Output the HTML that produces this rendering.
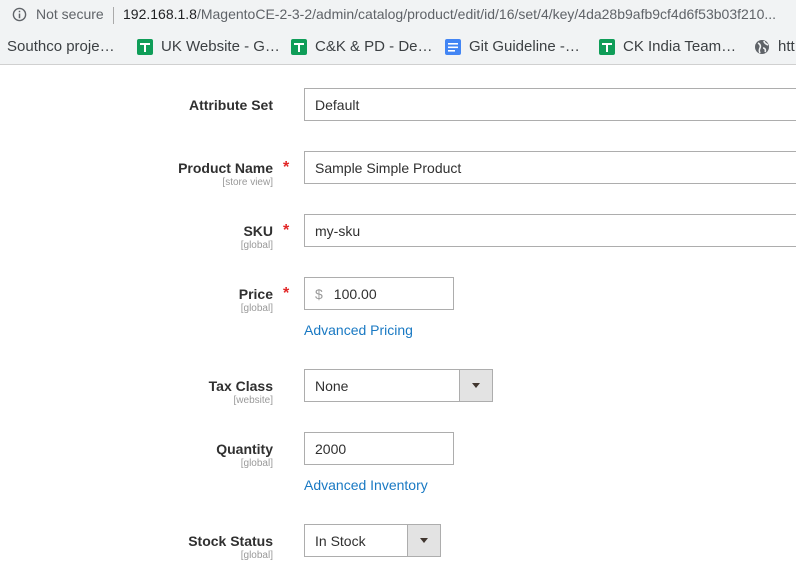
<!DOCTYPE html>
<html><head><style>
*{box-sizing:border-box;margin:0;padding:0}
body{width:796px;height:573px;overflow:hidden;background:#fff;font-family:"Liberation Sans",sans-serif;position:relative}
.top{position:absolute;left:0;top:0;width:796px;height:30px;background:#f1f3f4}
.url{position:absolute;top:6px;font-size:14px;color:#5f6368;white-space:nowrap}
.bm{position:absolute;left:0;top:30px;width:796px;height:35px;background:#f1f3f4;border-bottom:1px solid #d0d0d0}
.b{position:absolute;top:38px;font-size:15px;color:#3c4043;white-space:nowrap}
.ic{position:absolute;top:39px;width:16px;height:16px;border-radius:2px;background:#0f9d58}
.ic:before{content:"";position:absolute;left:3px;top:4px;width:10px;height:2px;background:#fff}
.ic:after{content:"";position:absolute;left:7px;top:4px;width:2px;height:9px;background:#fff}
.lab{position:absolute;right:523px;font-size:14px;font-weight:bold;color:#303030;text-align:right;white-space:nowrap;margin-top:1px}
.sc{position:absolute;right:523px;font-size:10px;color:#999;white-space:nowrap}
.ast{position:absolute;left:283px;color:#e22626;font-size:16px;font-weight:bold}
.in{position:absolute;left:304px;height:33px;border:1px solid #adadad;font-size:14px;color:#303030;padding:8px 10px 6px;white-space:nowrap;background:#fff}
.btn{position:absolute;top:-1px;right:-1px;height:33px;width:34px;border:1px solid #adadad;background:#e3e3e3}
.btn:after{content:"";position:absolute;left:12px;top:13px;border-left:4px solid transparent;border-right:4px solid transparent;border-top:5px solid #41362f}
.lnk{position:absolute;left:304px;font-size:14px;color:#1979c3}
</style></head><body>
<div class="top"></div>
<svg style="position:absolute;left:12px;top:7px" width="15" height="15" viewBox="0 0 16 16"><circle cx="8" cy="8" r="6.5" fill="none" stroke="#5f6368" stroke-width="1.5"/><rect x="7.2" y="7" width="1.6" height="5" fill="#5f6368"/><rect x="7.2" y="4" width="1.6" height="1.6" fill="#5f6368"/></svg>
<div class="url" style="left:36px">Not secure</div>
<div style="position:absolute;left:113px;top:7px;width:1px;height:17px;background:#aaa"></div>
<div class="url" style="left:123px"><span style="color:#202124">192.168.1.8</span>/MagentoCE-2-3-2/admin/catalog/product/edit/id/16/set/4/key/4da28b9afb9cf4d6f53b03f210...</div>
<div class="bm"></div>
<div class="b" style="left:7px">Southco proje…</div>
<div class="ic" style="left:137px"></div><div class="b" style="left:161px">UK Website - G…</div>
<div class="ic" style="left:291px"></div><div class="b" style="left:315px">C&amp;K &amp; PD - De…</div>
<svg style="position:absolute;left:445px;top:39px" width="16" height="16"><rect width="16" height="16" rx="2" fill="#4285f4"/><rect x="3" y="4" width="10" height="1.6" fill="#fff"/><rect x="3" y="7.5" width="10" height="1.6" fill="#fff"/><rect x="3" y="11" width="7" height="1.6" fill="#fff"/></svg>
<div class="b" style="left:469px">Git Guideline -…</div>
<div class="ic" style="left:599px"></div><div class="b" style="left:623px">CK India Team…</div>
<svg style="position:absolute;left:754px;top:39px" width="16" height="16"><circle cx="8" cy="8" r="7" fill="#5f6368"/><path d="M4 4c2 1 3 3 2 5s-1 3 0 5M10 2c0 2 2 3 4 4M9 9c2 0 3 2 2 4" stroke="#f1f3f4" stroke-width="1.6" fill="none"/></svg>
<div class="b" style="left:778px">htt</div>

<div class="lab" style="top:96px">Attribute Set</div>
<div class="in" style="top:88px;width:500px">Default</div>

<div class="lab" style="top:159px">Product Name</div><div class="sc" style="top:177px">[store view]</div>
<div class="ast" style="top:159px">*</div>
<div class="in" style="top:151px;width:500px">Sample Simple Product</div>

<div class="lab" style="top:222px">SKU</div><div class="sc" style="top:240px">[global]</div>
<div class="ast" style="top:222px">*</div>
<div class="in" style="top:214px;width:500px">my-sku</div>

<div class="lab" style="top:285px">Price</div><div class="sc" style="top:303px">[global]</div>
<div class="ast" style="top:285px">*</div>
<div class="in" style="top:277px;width:150px"><span style="color:#999;margin-right:11px">$</span>100.00</div>
<div class="lnk" style="top:322px">Advanced Pricing</div>

<div class="lab" style="top:377px">Tax Class</div><div class="sc" style="top:395px">[website]</div>
<div class="in" style="top:369px;width:189px">None<div class="btn"></div></div>

<div class="lab" style="top:440px">Quantity</div><div class="sc" style="top:458px">[global]</div>
<div class="in" style="top:432px;width:150px">2000</div>
<div class="lnk" style="top:477px">Advanced Inventory</div>

<div class="lab" style="top:532px">Stock Status</div><div class="sc" style="top:550px">[global]</div>
<div class="in" style="top:524px;width:137px">In Stock<div class="btn"></div></div>
</body></html>
